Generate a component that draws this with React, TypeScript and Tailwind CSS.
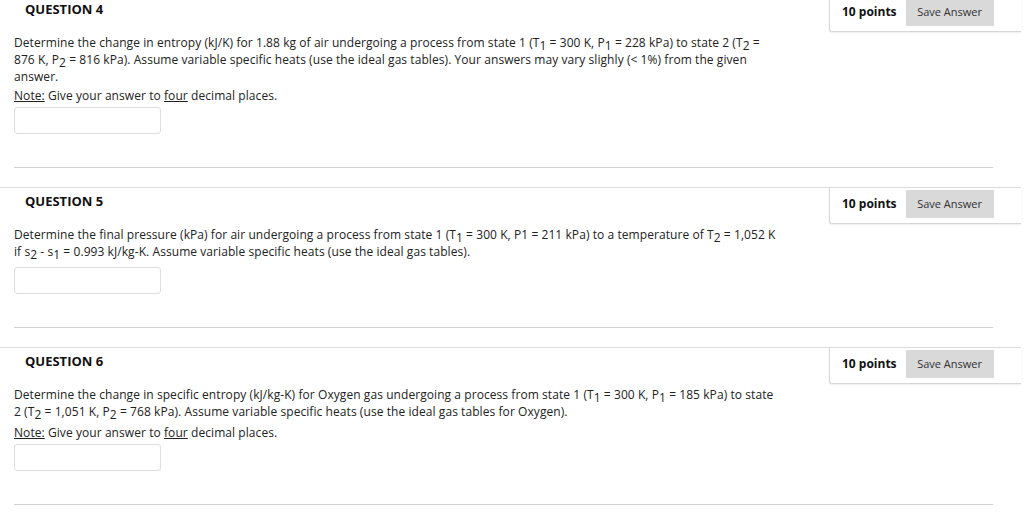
import React from 'react';

type Question = {
  num: number;
  body: React.ReactNode;
  note?: boolean;
  noteGap?: string;
};

const S = ({ children }: { children: React.ReactNode }) => (
  <sub className="text-[12px] leading-none relative top-[2.5px] align-baseline">{children}</sub>
);

const questions: Question[] = [
  {
    num: 4,
    body: (
      <>
        Determine the change in entropy (kJ/K) for 1.88 kg of air undergoing a process from state 1 (T<S>1</S> = 300 K, P<S>1</S> = 228 kPa) to state 2 (T<S>2</S> = 876 K, P<S>2</S> = 816 kPa). Assume variable specific heats (use the ideal gas tables). Your answers may vary slighly (&lt; 1%) from the given answer.
      </>
    ),
    note: true,
    noteGap: 'mt-[2px]',
  },
  {
    num: 5,
    body: (
      <>
        Determine the final pressure (kPa) for air undergoing a process from state 1 (T<S>1</S> = 300 K, P1 = 211 kPa) to a temperature of T<S>2</S> = 1,052 K if s<S>2</S> - s<S>1</S> = 0.993 kJ/kg-K. Assume variable specific heats (use the ideal gas tables).
      </>
    ),
  },
  {
    num: 6,
    body: (
      <>
        Determine the change in specific entropy (kJ/kg-K) for Oxygen gas undergoing a process from state 1 (T<S>1</S> = 300 K, P<S>1</S> = 185 kPa) to state 2 (T<S>2</S> = 1,051 K, P<S>2</S> = 768 kPa). Assume variable specific heats (use the ideal gas tables for Oxygen).
      </>
    ),
    note: true,
    noteGap: 'mt-[4px]',
  },
];

function QuestionBlock({ q, first }: { q: Question; first: boolean }) {
  return (
    <section className={first ? '-mt-[5px]' : 'mt-[19px]'}>
      <div className="h-[1px] bg-[#dcdcdc]" />
      <div className="flex justify-between h-[36px]">
        <h3 className="pl-[25px] pt-[5px] text-[13px] leading-[16px] font-bold text-[#111]">
          QUESTION {q.num}
        </h3>
        <div className="w-[192px] h-[36px] border-l border-b border-[#d6d6d6] rounded-bl-[3px] shadow-[0_1px_2px_rgba(0,0,0,0.08)] flex items-start pt-[2px] pl-[12px] gap-[9px]">
          <span className="text-[12px] font-bold text-[#111] leading-[28px]">10 points</span>
          <button className="w-[88px] h-[28px] bg-[#d9d9d9] text-[11px] text-[#333] leading-[28px] text-center">
            Save Answer
          </button>
        </div>
      </div>
      <div className="pl-[14px] pt-[2px] tracking-[0.07px]">
        <p className="w-[762px] text-[12px] leading-[17px] text-[#222]">{q.body}</p>
        {q.note && (
          <p className={`${q.noteGap} text-[12px] leading-[17px] text-[#222]`}>
            <span className="underline">Note:</span> Give your answer to <span className="underline">four</span> decimal places.
          </p>
        )}
        <div
          className={`${q.note ? 'mt-[3px]' : 'mt-[7px]'} w-[147px] h-[27px] border border-[#dedede] rounded-[3px] bg-white`}
        />
      </div>
      <div className="mt-[33px] ml-[14px] w-[979px] h-[1px] bg-[#d2d2d2]" />
    </section>
  );
}

export default function App() {
  return (
    <div className="w-[1024px] h-[513px] overflow-hidden bg-white" style={{ fontFamily: '"Open Sans", sans-serif' }}>
      <div className="w-[1021px]">
        {questions.map((q, i) => (
          <QuestionBlock key={q.num} q={q} first={i === 0} />
        ))}
      </div>
    </div>
  );
}
